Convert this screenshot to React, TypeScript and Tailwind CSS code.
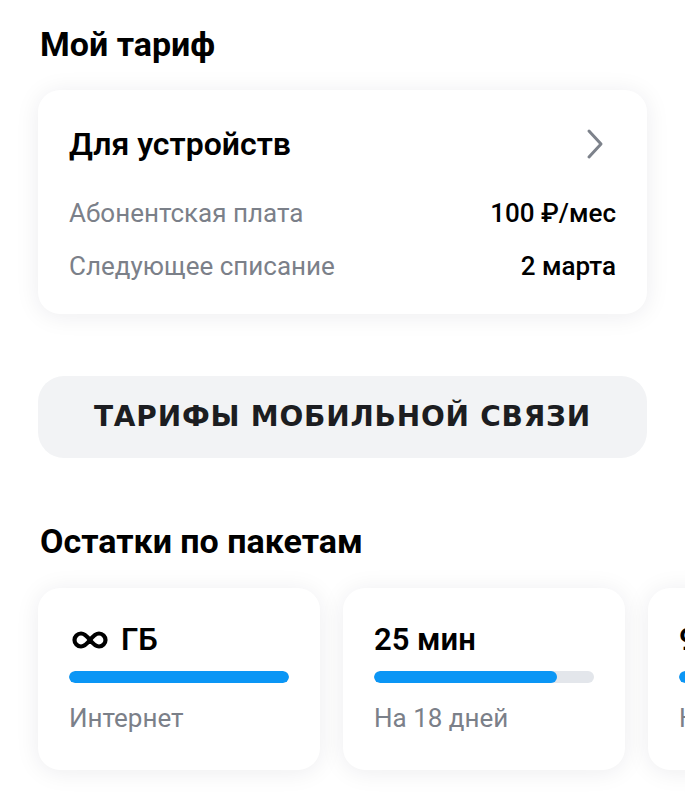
import React from "react";

const sans = { fontFamily: "Roboto, 'Noto Sans', sans-serif" };
const wide = { fontFamily: "'DejaVu Sans', Inter, sans-serif" };

function Chevron() {
  return (
    <svg width="18" height="32" viewBox="0 0 18 32" fill="none">
      <path d="M3 3 L15 16 L3 29" stroke="#7d828b" strokeWidth="3" strokeLinecap="round" strokeLinejoin="round" />
    </svg>
  );
}

function Infinity() {
  return (
    <svg width="36" height="18" viewBox="0 0 36 18" fill="none">
      <path
        d="M18 9 C14.5 4.5 12 2.5 9 2.5 C5.4 2.5 2.5 5.4 2.5 9 C2.5 12.6 5.4 15.5 9 15.5 C12 15.5 14.5 13.5 18 9 C21.5 4.5 24 2.5 27 2.5 C30.6 2.5 33.5 5.4 33.5 9 C33.5 12.6 30.6 15.5 27 15.5 C24 15.5 21.5 13.5 18 9 Z"
        stroke="#000"
        strokeWidth="4.2"
      />
    </svg>
  );
}

type Pack = { title: React.ReactNode; pct: number; caption: string };

const packs: Pack[] = [
  {
    title: (
      <span className="flex items-center gap-[13px] pl-[3px]">
        <Infinity />
        <span>ГБ</span>
      </span>
    ),
    pct: 100,
    caption: "Интернет",
  },
  { title: "25 мин", pct: 83, caption: "На 18 дней" },
  { title: "90 SMS", pct: 60, caption: "На 18 дней" },
];

function PackCard({ p }: { p: Pack }) {
  return (
    <div className="w-[282px] h-[182px] shrink-0 rounded-[22px] bg-white shadow-[0_2px_24px_rgba(20,30,50,0.08)] px-[31px] pt-[34px]">
      <div className="text-[31px] leading-[36px] font-semibold text-black h-[36px]">{p.title}</div>
      <div className="mt-[13px] h-[12px] rounded-full bg-[#e3e6eb] overflow-hidden">
        <div className="h-full rounded-full bg-[#0b96f5]" style={{ width: `${p.pct}%` }} />
      </div>
      <div className="mt-[20px] text-[26px] leading-[30px] text-[#7b8089]">{p.caption}</div>
    </div>
  );
}

export default function App() {
  return (
    <div className="w-[685px] h-[800px] bg-white overflow-hidden" style={sans}>
      <div className="px-[38px]">
        <h2 className="pt-[24px] pl-[2px] text-[34px] leading-[40px] font-bold text-black">Мой тариф</h2>

        <div className="mt-[26px] rounded-[22px] bg-white shadow-[0_2px_24px_rgba(20,30,50,0.08)] pl-[31px] pr-[31px] pt-[36px] pb-[33px]">
          <div className="flex items-center justify-between h-[36px]">
            <span className="text-[32px] leading-[36px] font-semibold text-black">Для устройств</span>
            <span className="mr-[12px]"><Chevron /></span>
          </div>
          <div className="mt-[36px] flex items-center justify-between text-[26px] leading-[30px]">
            <span className="text-[#7b8089]">Абонентская плата</span>
            <span className="font-medium text-black">100 ₽/мес</span>
          </div>
          <div className="mt-[23px] flex items-center justify-between text-[26px] leading-[30px]">
            <span className="text-[#7b8089]">Следующее списание</span>
            <span className="font-medium text-black">2 марта</span>
          </div>
        </div>

        <button className="mt-[62px] w-full h-[82px] rounded-[26px] bg-[#f2f3f5] flex items-center justify-center">
          <span className="text-[28px] font-bold tracking-[0.8px] text-[#1c1d21]" style={wide}>
            ТАРИФЫ МОБИЛЬНОЙ СВЯЗИ
          </span>
        </button>

        <h2 className="mt-[63px] pl-[2px] text-[34px] leading-[40px] font-bold text-black">Остатки по пакетам</h2>
      </div>

      <div className="mt-[27px] flex gap-[23px] pl-[38px]">
        {packs.map((p, i) => (
          <PackCard key={i} p={p} />
        ))}
      </div>
    </div>
  );
}
